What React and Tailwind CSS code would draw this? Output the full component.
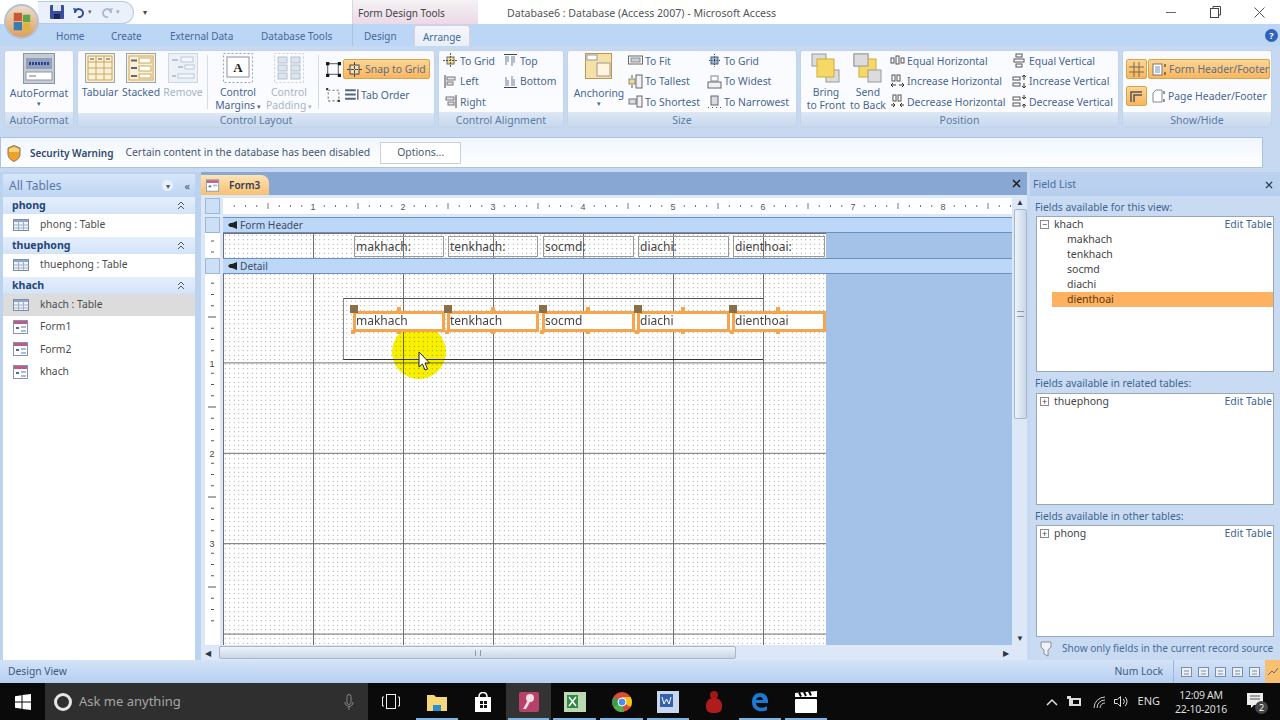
import { Fragment } from "react";

const blue = "text-[#46668f]";

function Mini({ children, w = 15, h = 15, className = "" }) {
  return (
    <svg width={w} height={h} viewBox="0 0 15 15" fill="none" className={"shrink-0 " + className}>
      {children}
    </svg>
  );
}

// small ribbon glyphs
const ic = {
  grid: (
    <Mini>
      <rect x="4" y="4" width="7" height="7" fill="#f2d98c" stroke="#6a6a6a" />
      <path d="M7.5 0v15M0 7.5h15" stroke="#555" strokeDasharray="2 1" />
    </Mini>
  ),
  top: (
    <Mini>
      <path d="M1 1.5h13" stroke="#444" />
      <path d="M3 3v9M5 3v6M9 3v10M11 3v7" stroke="#6d7f96" />
    </Mini>
  ),
  left: (
    <Mini>
      <path d="M2 1v13" stroke="#444" />
      <rect x="4" y="3" width="8" height="3" fill="#e5e9ef" stroke="#777" />
      <rect x="4" y="8" width="6" height="3" fill="#e5e9ef" stroke="#777" />
    </Mini>
  ),
  bottom: (
    <Mini>
      <path d="M1 13.5h13" stroke="#444" />
      <path d="M3 3v9M5 6v6M9 2v10M11 5v7" stroke="#6d7f96" />
    </Mini>
  ),
  right: (
    <Mini>
      <path d="M13 1v13" stroke="#444" />
      <rect x="3" y="3" width="8" height="3" fill="#e5e9ef" stroke="#777" />
      <rect x="5" y="8" width="6" height="3" fill="#e5e9ef" stroke="#777" />
    </Mini>
  ),
  fit: (
    <Mini>
      <rect x=".5" y="3" width="14" height="8" fill="#fff" stroke="#666" />
      <rect x="3" y="5" width="9" height="4" fill="#c8d2de" stroke="#888" />
    </Mini>
  ),
  tallest: (
    <Mini>
      <rect x="8" y="1" width="6" height="13" fill="#eef2f7" stroke="#666" />
      <rect x="1" y="5" width="6" height="5" fill="#f0d98a" stroke="#888" />
      <path d="M4 1v3M4 11v3" stroke="#555" />
    </Mini>
  ),
  shortest: (
    <Mini>
      <rect x="9" y="2" width="5" height="11" fill="#eef2f7" stroke="#666" />
      <rect x="1" y="5" width="7" height="5" fill="#d7dee8" stroke="#777" />
    </Mini>
  ),
  gridSize: (
    <Mini>
      <rect x="4" y="4" width="7" height="7" fill="#9db8dc" stroke="#4a5c75" />
      <path d="M2 7.5h11M7.5 1v13" stroke="#333" strokeDasharray="1 1.5" />
    </Mini>
  ),
  widest: (
    <Mini>
      <rect x="1" y="8" width="13" height="6" fill="#eef2f7" stroke="#666" />
      <rect x="4" y="2" width="7" height="5" fill="#f6fafd" stroke="#888" />
    </Mini>
  ),
  narrowest: (
    <Mini>
      <rect x="4" y="2" width="7" height="9" fill="#d5dde8" stroke="#666" />
      <path d="M1 13.5h13" stroke="#555" strokeDasharray="1 3" />
    </Mini>
  ),
  eqH: (
    <Mini>
      <rect x="1" y="5" width="3" height="5" fill="#fff" stroke="#555" />
      <rect x="6" y="3" width="3" height="8" fill="#fff" stroke="#555" />
      <rect x="11" y="5" width="3" height="5" fill="#fff" stroke="#555" />
    </Mini>
  ),
  incH: (
    <Mini>
      <rect x="2" y="1" width="3" height="6" fill="#fff" stroke="#555" />
      <rect x="7" y="1" width="3" height="6" fill="#fff" stroke="#555" />
      <path d="M1 11h5M9 11h5M1 11l2-2M1 11l2 2M14 11l-2-2M14 11l-2 2" stroke="#333" />
    </Mini>
  ),
  decH: (
    <Mini>
      <rect x="3" y="1" width="3" height="6" fill="#fff" stroke="#555" />
      <rect x="8" y="1" width="3" height="6" fill="#fff" stroke="#555" />
      <path d="M1 11h4M10 11h4M5 11l-2-2M5 11l-2 2M10 11l2-2M10 11l2 2" stroke="#333" />
    </Mini>
  ),
  eqV: (
    <Mini>
      <rect x="4" y="1" width="6" height="3" fill="#fff" stroke="#555" />
      <rect x="2" y="6" width="10" height="3" fill="#fff" stroke="#555" />
      <rect x="4" y="11" width="6" height="3" fill="#fff" stroke="#555" />
    </Mini>
  ),
  incV: (
    <Mini>
      <rect x="1" y="3" width="7" height="3" fill="#fff" stroke="#555" />
      <rect x="1" y="9" width="7" height="3" fill="#fff" stroke="#555" />
      <path d="M12 1v5M12 9v5M12 1l-2 2M12 1l2 2M12 14l-2-2M12 14l2-2" stroke="#333" />
    </Mini>
  ),
  decV: (
    <Mini>
      <rect x="1" y="3" width="7" height="3" fill="#fff" stroke="#555" />
      <rect x="1" y="9" width="7" height="3" fill="#fff" stroke="#555" />
      <path d="M12 1v4M12 10v4M12 5l-2-2M12 5l2-2M12 10l-2 2M12 10l2 2" stroke="#333" />
    </Mini>
  ),
};

function Small({ icon, label }) {
  return (
    <div className="flex h-[20.5px] items-center gap-[2px] whitespace-nowrap">
      {icon}
      <span>{label}</span>
    </div>
  );
}

function Large({ width, icon, lines, caret, disabled }) {
  return (
    <div
      className={"flex flex-col items-center leading-[12px] " + (disabled ? "text-[#a6b4c6]" : "")}
      style={{ width }}
    >
      <div className="flex h-[34px] shrink-0 items-start justify-center pt-[2px]">{icon}</div>
      {lines.map((l, i) => (
        <span key={i} className="mt-[1px] whitespace-nowrap">
          {l}
          {caret && i === lines.length - 1 ? <span className="text-[7px]"> ▾</span> : null}
        </span>
      ))}
    </div>
  );
}

function Group({ label, width, className = "", children }) {
  return (
    <div
      className="flex h-[78px] flex-col rounded-[3px] border border-[#c4d4e8] bg-gradient-to-b from-[#f8fafe] to-[#fdfdff]"
      style={{ width }}
    >
      <div className={"flex h-[62px] " + className}>{children}</div>
      <div className="flex h-[15px] items-center justify-center bg-gradient-to-b from-[#dde7f5] to-[#c7d8ee] pt-[1px] text-[10.5px] leading-none text-[#5a7aa2]">
        {label}
      </div>
    </div>
  );
}

function TableTile({ cols = 3 }) {
  const border = "#d2a650";
  return (
    <svg width="30" height="30" viewBox="0 0 30 30">
      <rect x=".5" y=".5" width="29" height="29" fill="#f7f0da" stroke="#9aa5b3" />
      <rect x="3" y="3" width="24" height="24" fill="none" stroke={border} />
      {cols === 3 ? (
        <>
          <path d="M3 9h24M3 15h24M3 21h24M11 3v24M19 3v24" stroke={border} />
          <path d="M5 6h4M13 6h4M21 6h4" stroke="#555" />
        </>
      ) : (
        <>
          <rect x="13" y="5" width="12" height="5" fill="#fff" stroke={border} />
          <rect x="13" y="13" width="12" height="5" fill="#fff" stroke={border} />
          <rect x="13" y="21" width="12" height="4" fill="#fff" stroke={border} />
          <path d="M5 7.5h6M5 15h6M5 23h6" stroke="#666" strokeWidth="2" />
        </>
      )}
    </svg>
  );
}

function RemoveIcon() {
  return (
    <svg width="30" height="30" viewBox="0 0 30 30">
      <rect x=".5" y=".5" width="29" height="29" fill="#ecf1f8" stroke="#cdd7e5" />
      <g stroke="#bcc8d8" fill="#f4f7fb">
        <rect x="13" y="4" width="12" height="5" />
        <rect x="17" y="12" width="9" height="4" />
        <rect x="10" y="21" width="16" height="4" />
      </g>
      <path d="M4 7h6M10 14h5M4 23h4" stroke="#b8c4d4" strokeWidth="2" />
    </svg>
  );
}

function BringIcon({ back }) {
  return (
    <svg width="30" height="30" viewBox="0 0 30 30">
      <rect x="1" y="1" width="14" height="12" fill="#dcdcdc" stroke="#9a9a9a" />
      {!back && <rect x="15" y="17" width="13" height="12" fill="#dcdcdc" stroke="#9a9a9a" />}
      <rect x="6" y="6" width="17" height="18" fill="#f6d867" stroke="#d3a93a" />
      {back && <rect x="15" y="17" width="13" height="12" fill="#dcdcdc" stroke="#9a9a9a" />}
      {back && <rect x="1" y="1" width="14" height="12" fill="#dcdcdc" stroke="#9a9a9a" />}
    </svg>
  );
}

const hot = "rounded-[2px] border border-[#d9a54b] bg-gradient-to-b from-[#fcd592] to-[#f9b660]";

function Ribbon() {
  return (
    <div className={"flex h-[84px] gap-[3px] bg-[#c6d9f1] pl-[4px] pt-[4px] text-[10.4px] leading-none " + blue}>
      <Group label="AutoFormat" width={70}>
        <div className="flex w-full flex-col items-center">
          <svg width="32" height="31" viewBox="0 0 32 31" className="mt-[2px]">
            <rect x=".5" y=".5" width="31" height="30" fill="#c5ccd6" stroke="#8c96a3" />
            <rect x="3" y="5" width="26" height="11" fill="#8fa0b8" />
            <path d="M6 10.5h20" stroke="#2b3f9b" strokeWidth="3" strokeDasharray="2 1" />
            <rect x="3" y="19" width="26" height="8" fill="#fff" stroke="#8c96a3" />
            <path d="M6 23h7" stroke="#777" />
          </svg>
          <span className="mt-[4px]">AutoFormat</span>
          <span className="mt-[2px] text-[7px]">▾</span>
        </div>
      </Group>

      <Group label="Control Layout" width={358} className="pl-[3px]">
        <Large width={38} icon={<TableTile cols={3} />} lines={["Tabular"]} />
        <div className="w-[3px]" />
        <Large width={38} icon={<TableTile cols={2} />} lines={["Stacked"]} />
        <div className="w-[3px]" />
        <Large width={40} icon={<RemoveIcon />} lines={["Remove"]} disabled />
        <div className="mx-[4px] my-[4px] w-px bg-[#d4dce8]" />
        <Large
          width={52}
          icon={
            <svg width="30" height="30" viewBox="0 0 30 30">
              <rect x=".5" y=".5" width="29" height="29" fill="none" stroke="#9aa5b3" strokeDasharray="2 2" />
              <rect x="4" y="4" width="22" height="20" fill="#fff" stroke="#8a94a2" />
              <text x="15" y="19" textAnchor="middle" fontSize="13" fontWeight="700" fontFamily="Liberation Serif" fill="#222">
                A
              </text>
            </svg>
          }
          lines={["Control", "Margins"]}
          caret
        />
        <Large
          width={50}
          disabled
          icon={
            <svg width="30" height="30" viewBox="0 0 30 30">
              <rect x=".5" y=".5" width="29" height="29" fill="none" stroke="#c5cfdc" strokeDasharray="2 2" />
              <g fill="#dce4ee" stroke="#b5c1d1">
                <rect x="4" y="4" width="9" height="6" />
                <rect x="17" y="4" width="9" height="6" />
                <rect x="4" y="12" width="9" height="6" />
                <rect x="17" y="12" width="9" height="6" />
                <rect x="4" y="20" width="9" height="6" />
                <rect x="17" y="20" width="9" height="6" />
              </g>
            </svg>
          }
          lines={["Control", "Padding"]}
          caret
        />
        <div className="mx-[4px] my-[4px] w-px bg-[#d4dce8]" />
        <div className="flex flex-col pl-[2px]">
          <div className="mt-[8px] flex h-[20px] items-center">
            <Mini w={16} h={16}>
              <rect x="2.5" y="2.5" width="10" height="10" stroke="#666" />
              <rect x="1" y="1" width="3" height="3" fill="#111" />
              <rect x="12" y="1" width="3" height="3" fill="#111" />
              <rect x="1" y="12" width="3" height="3" fill="#111" />
              <rect x="12" y="12" width="3" height="3" fill="#111" />
            </Mini>
            <div className={"ml-[2px] flex h-[20px] w-[87px] items-center gap-[3px] whitespace-nowrap pl-[3px] text-[#5b6e86] " + hot}>
              <Mini>
                <rect x="3" y="3" width="9" height="9" fill="#f8dfa8" stroke="#445" />
                <path d="M0 7.5h15M7.5 0v15" stroke="#445" strokeDasharray="3 1" />
              </Mini>
              Snap to Grid
            </div>
          </div>
          <div className="mt-[8px] flex h-[16px] items-center">
            <Mini w={16} h={16}>
              <rect x="3" y="3" width="10" height="10" stroke="#777" strokeDasharray="2 2" />
              <rect x="1" y="1" width="2" height="2" fill="#333" />
              <rect x="12" y="12" width="2" height="2" fill="#333" />
            </Mini>
            <Mini w={16} h={16} className="ml-[3px]">
              <path d="M1 3h10M1 7h10M1 11h10" stroke="#567" strokeWidth="2" />
              <path d="M13 2v10" stroke="#333" />
            </Mini>
            <span className="ml-[1px] whitespace-nowrap">Tab Order</span>
          </div>
        </div>
      </Group>

      <Group label="Control Alignment" width={126} className="pl-[4px]">
        <div className="-mt-[0.5px] flex w-[60px] flex-col">
          <Small icon={ic.grid} label="To Grid" />
          <Small icon={ic.left} label="Left" />
          <Small icon={ic.right} label="Right" />
        </div>
        <div className="-mt-[0.5px] flex flex-col">
          <Small icon={ic.top} label="Top" />
          <Small icon={ic.bottom} label="Bottom" />
        </div>
      </Group>

      <Group label="Size" width={230} className="pl-[4px]">
        <div className="flex w-[54px] flex-col items-center">
          <svg width="28" height="26" viewBox="0 0 28 26" className="mt-[2px] shrink-0">
            <rect x=".5" y=".5" width="26" height="25" fill="#f7e0a8" stroke="#b89a55" />
            <rect x="2" y="2" width="10" height="5" fill="#fff" stroke="#999" />
            <rect x="12" y="10" width="13" height="13" fill="#fff5dc" stroke="#999" />
          </svg>
          <span className="mt-[9px]">Anchoring</span>
          <span className="mt-[2px] text-[7px]">▾</span>
        </div>
        <div className="-mt-[0.5px] ml-[2px] flex w-[79px] flex-col">
          <Small icon={ic.fit} label="To Fit" />
          <Small icon={ic.tallest} label="To Tallest" />
          <Small icon={ic.shortest} label="To Shortest" />
        </div>
        <div className="-mt-[0.5px] flex flex-col">
          <Small icon={ic.gridSize} label="To Grid" />
          <Small icon={ic.widest} label="To Widest" />
          <Small icon={ic.narrowest} label="To Narrowest" />
        </div>
      </Group>

      <Group label="Position" width={319} className="pl-[4px]">
        <Large width={42} icon={<BringIcon />} lines={["Bring", "to Front"]} />
        <Large width={42} icon={<BringIcon back />} lines={["Send", "to Back"]} />
        <div className="-mt-[0.5px] ml-[1px] flex w-[122px] flex-col">
          <Small icon={ic.eqH} label="Equal Horizontal" />
          <Small icon={ic.incH} label="Increase Horizontal" />
          <Small icon={ic.decH} label="Decrease Horizontal" />
        </div>
        <div className="-mt-[0.5px] flex flex-col">
          <Small icon={ic.eqV} label="Equal Vertical" />
          <Small icon={ic.incV} label="Increase Vertical" />
          <Small icon={ic.decV} label="Decrease Vertical" />
        </div>
      </Group>

      <Group label="Show/Hide" width={150} className="flex-col pl-[3px]">
        <div className="mt-[8px] flex h-[20px] items-center">
          <div className={"flex h-[20px] w-[21px] items-center justify-center " + hot}>
            <Mini>
              <path d="M0 5h15M0 10h15M5 0v15M10 0v15" stroke="#7a6a4a" />
            </Mini>
          </div>
          <div className={"ml-px flex h-[20px] w-[122px] items-center gap-[2px] whitespace-nowrap pl-[3px] text-[#5b6e86] " + hot}>
            <Mini>
              <rect x="1" y="2" width="9" height="11" fill="#fff" stroke="#777" />
              <rect x="3" y="4" width="5" height="7" fill="#b8c8dc" />
              <path d="M13 2v3M13 10v3" stroke="#222" />
            </Mini>
            Form Header/Footer
          </div>
        </div>
        <div className="mt-[7px] flex h-[20px] items-center">
          <div className={"flex h-[20px] w-[21px] items-center justify-center " + hot}>
            <Mini>
              <path d="M2 13V3h11M5 13V6h8" stroke="#555" strokeWidth="1.5" />
            </Mini>
          </div>
          <Mini className="ml-[4px]">
            <path d="M2 4l3-3h6v12H2z" fill="#fff" stroke="#888" />
            <path d="M13 2v3M13 10v3" stroke="#333" />
          </Mini>
          <span className="ml-[2px] whitespace-nowrap">Page Header/Footer</span>
        </div>
      </Group>
    </div>
  );
}

function TitleBar() {
  return (
    <div className="relative flex h-[24px] items-center bg-white text-[10.6px] text-[#444]">
      <div className="ml-[38px] flex h-[23px] w-[96px] shrink-0 items-center gap-[9px] rounded-r-[12px] border border-l-0 border-[#b6cbe6] bg-[#eaf1fb] pl-[12px]">
        <svg width="14" height="14" viewBox="0 0 14 14">
          <rect width="14" height="14" rx="1" fill="#3c4c9c" />
          <rect x="3" y="0" width="8" height="6" fill="#dfe6f4" />
          <rect x="4" y="9" width="6" height="5" fill="#1c2558" />
        </svg>
        <svg width="12" height="12" viewBox="0 0 12 12" fill="none">
          <path d="M2 7a4 4 0 1 1 3 4" stroke="#2f4f9a" strokeWidth="2" />
          <path d="M0 2l5 1-3 4z" fill="#2f4f9a" />
        </svg>
        <span className="-ml-[6px] text-[7px] text-[#667]">▾</span>
        <svg width="12" height="12" viewBox="0 0 12 12" fill="none">
          <path d="M10 7a4 4 0 1 0-3 4" stroke="#a9bbd4" strokeWidth="2" />
          <path d="M12 2l-5 1 3 4z" fill="#a9bbd4" />
        </svg>
        <span className="-ml-[6px] text-[7px] text-[#a0aab8]">▾</span>
      </div>
      <span className="ml-[9px] w-[209px] text-[8px] leading-none text-[#444]">▾</span>
      <div className="flex h-[24px] w-[126px] shrink-0 items-center border-l border-[#d6d6dc] bg-gradient-to-b from-[#f4f2f4] to-[#ecd9e6] pl-[5px] pt-[2px] text-[10px] text-[#444]">
        Form Design Tools
      </div>
      <span className="ml-[29px] whitespace-nowrap pt-[3px] text-[#555]">Database6 : Database (Access 2007) - Microsoft Access</span>
      <div className="ml-auto flex items-center gap-[33px] pr-[15px]">
        <svg width="12" height="12" viewBox="0 0 12 12">
          <path d="M1 6.5h10" stroke="#666" />
        </svg>
        <svg width="11" height="12" viewBox="0 0 11 12" fill="none">
          <rect x=".5" y="2.5" width="8" height="9" stroke="#444" />
          <path d="M3 2V.5h7.500V9H9" stroke="#444" />
        </svg>
        <svg width="11" height="11" viewBox="0 0 11 11">
          <path d="M.5 .5l10 10M10.500 .5l-10 10" stroke="#555" />
        </svg>
      </div>
    </div>
  );
}

function TabRow() {
  return (
    <div className="relative flex h-[22px] items-end bg-[#bcd6f5] text-[10px] leading-none text-[#47689a]">
      <div className="flex h-full items-center whitespace-nowrap pl-[56px] pt-[2px]">
        <span className="w-[55px]">Home</span>
        <span className="w-[59px]">Create</span>
        <span className="w-[91px]">External Data</span>
        <span className="w-[91px]">Database Tools</span>
      </div>
      <div className="flex h-full w-[62px] items-center border-l border-[#a9c2e0] pl-[11px] pt-[2px]">Design</div>
      <div className="flex h-[21px] w-[56px] items-center justify-center rounded-t-[3px] border border-b-0 border-[#e6c9d4] bg-gradient-to-b from-[#f4f7fc] to-[#e8eff9] pt-[1px]">
        Arrange
      </div>
      <div className="ml-auto mr-[2px] flex h-full items-center">
        <span className="flex h-[13px] w-[13px] items-center justify-center rounded-full bg-[#2f63b8] text-[9px] font-bold text-white">?</span>
      </div>
    </div>
  );
}

function OfficeButton() {
  return (
    <div className="absolute left-[4px] top-[4px] flex h-[35px] w-[35px] items-center justify-center rounded-full border-2 border-[#b4c2d4] bg-gradient-to-b from-[#ecdcc8] to-[#dc9f60]">
      <svg width="22" height="22" viewBox="0 0 24 24">
        <rect x="3" y="2" width="9" height="9" fill="#c9583a" />
        <rect x="13" y="4" width="8" height="8" fill="#5fa548" />
        <rect x="3" y="12" width="9" height="9" fill="#3a7cae" />
        <rect x="13" y="13" width="8" height="8" fill="#e0b43c" />
      </svg>
    </div>
  );
}

function SecurityBar() {
  return (
    <div className="h-[42px] bg-[#c6d9f1] pt-[7px]">
      <div className="flex h-[31px] w-[1263px] items-center border border-[#a8c3e4] bg-gradient-to-b from-[#f0f6fe] to-white pl-[6px] pt-[1px] text-[10.4px] text-[#45566f]">
        <svg width="14" height="17" viewBox="0 0 14 17">
          <path d="M7 .5l6 2.500v6c0 4-3 6-6 7.500C4 15 1 13 1 9V3z" fill="#f1a02c" stroke="#8a7a5a" />
          <path d="M7 2l5 2v3H2V4z" fill="#f8d47a" />
        </svg>
        <span className="ml-[9px] whitespace-nowrap text-[10px] font-semibold text-[#2f4a70]">Security Warning</span>
        <span className="ml-[12px] whitespace-nowrap">Certain content in the database has been disabled</span>
        <span className="ml-[10px] flex h-[22px] w-[81px] items-center justify-center border border-[#c7d1de] bg-white text-[#4a5a70]">
          Options...
        </span>
      </div>
    </div>
  );
}

function NavGroup({ name, children }) {
  return (
    <div className="mb-[2px]">
      <div className="flex h-[17px] items-center justify-between bg-gradient-to-b from-[#e4effc] to-[#d3e3f7] pl-[9px] pr-[10px] text-[10.6px] font-bold text-[#24457a]">
        {name}
        <svg width="8" height="9" viewBox="0 0 8 9" fill="none">
          <path d="M1 4l3-3 3 3M1 8l3-3 3 3" stroke="#556" />
        </svg>
      </div>
      {children}
    </div>
  );
}

function NavItem({ label, form, active }) {
  const height = form ? "h-[22.3px] " : active ? "h-[22px] " : "h-[21px] ";
  return (
    <div className={"flex items-center pl-[10px] text-[10.3px] text-[#4c4c4c] " + height + (active ? "bg-[#dcdcdc]" : "bg-white")}>
      {form ? (
        <svg width="16" height="14" viewBox="0 0 16 14">
          <rect x=".5" y=".5" width="14" height="13" fill="#fff" stroke="#8494ac" />
          <rect x="1" y="1" width="13" height="3" fill="#c0598a" />
          <path d="M3 8h3" stroke="#4a6aa0" strokeWidth="2" />
          <rect x="8" y="6" width="5" height="2" fill="#a9bdd8" />
          <rect x="8" y="10" width="5" height="2" fill="#a9bdd8" />
        </svg>
      ) : (
        <svg width="16" height="12" viewBox="0 0 16 12">
          <rect x=".5" y=".5" width="15" height="11" fill="#eef3fa" stroke="#7f8da3" />
          <rect x="1" y="1" width="14" height="2" fill="#8ea6c8" />
          <path d="M1 6h14M1 9h14M5.500 3v8M10.500 3v8" stroke="#9fb0c8" />
        </svg>
      )}
      <span className="ml-[11px] whitespace-nowrap">{label}</span>
    </div>
  );
}

function NavPane() {
  return (
    <div className="flex h-full w-[198px] flex-col bg-[#bcd3f0] pl-[3px] pr-[3px] pt-[2px]">
      <div className="flex h-[23px] shrink-0 items-center justify-between bg-gradient-to-b from-[#d7e6f9] to-[#bdd5f3] pl-[6px] pr-[5px] text-[12px] text-[#5a7aa5]">
        All Tables
        <div className="flex items-center gap-[11px]">
          <span className="flex h-[11px] w-[11px] items-center justify-center rounded-full bg-[#e8f0fa] text-[8px] leading-none text-[#556]">▾</span>
          <span className="text-[11px] leading-none text-[#556]">«</span>
        </div>
      </div>
      <div className="flex-1 bg-white">
        <NavGroup name="phong">
          <NavItem label="phong : Table" />
        </NavGroup>
        <NavGroup name="thuephong">
          <NavItem label="thuephong : Table" />
        </NavGroup>
        <NavGroup name="khach">
          <NavItem label="khach : Table" active />
          <NavItem label="Form1" form />
          <NavItem label="Form2" form />
          <NavItem label="khach" form />
        </NavGroup>
      </div>
    </div>
  );
}

function HRuler() {
  const ticks = Array.from({ length: 71 }, (_, i) => i);
  return (
    <svg width="789" height="16" className="block bg-white">
      {ticks.map((i) => {
        const x = i * 11.25;
        if (i % 8 === 0) {
          return i === 0 ? null : (
            <text key={i} x={x} y="12" textAnchor="middle" fontSize="9" fontFamily="Liberation Sans" fill="#555">
              {i / 8}
            </text>
          );
        }
        return <path key={i} d={i % 4 === 0 ? `M${x} 5v6` : `M${x} 7v2`} stroke="#777" />;
      })}
    </svg>
  );
}

function VRuler() {
  const ticks = Array.from({ length: 32 }, (_, i) => i);
  return (
    <svg width="15" height="371" className="block bg-white">
      {ticks.map((i) => {
        const y = i * 11.25 - 2;
        if (i % 8 === 0) {
          return i === 0 ? null : (
            <text key={i} x="7" y={y + 5} textAnchor="middle" fontSize="9" fontFamily="Liberation Sans" fill="#444">
              {i / 8}
            </text>
          );
        }
        return <path key={i} d={i % 4 === 0 ? `M3 ${y}h8` : `M6 ${y}h3`} stroke="#555" />;
      })}
    </svg>
  );
}

function SectionBar({ label }) {
  return (
    <div className="flex h-[16px] border-y border-[#6f8fbd] bg-[#bdd7f9] pl-[5px] text-[10.2px] leading-none text-[#3d4d62]">
      <span className="flex items-center gap-[3px]">
        <svg width="9" height="8" viewBox="0 0 9 8">
          <path d="M9 0v8L4 6H2L0 4l2-2h2z" fill="#222" />
        </svg>
        {label}
      </span>
    </div>
  );
}

const gridBg =
  "bg-[linear-gradient(to_right,#6f6f6f_1px,transparent_1px),linear-gradient(to_bottom,#6f6f6f_1px,transparent_1px),radial-gradient(circle,#8a8a8a_0.7px,transparent_0.9px)] bg-[length:90px_90.4px,90px_90.4px,4.5px_4.5px]";

const fields = ["makhach", "tenkhach", "socmd", "diachi", "dienthoai"];
const fieldX = [131, 225, 320, 415, 510];
const fieldW = [90, 90, 91, 91, 92];

function HeaderCanvas() {
  return (
    <div className={"relative h-[25px] w-[603px] bg-white " + gridBg}>
      {fields.map((f, i) => (
        <div
          key={f}
          className="absolute top-[3px] h-[21px] border border-[#9a9a9a] pl-[1px] text-[12px] leading-[19px] text-[#444]"
          style={{ left: fieldX[i], width: fieldW[i] }}
        >
          {f}:
        </div>
      ))}
    </div>
  );
}

function DetailCanvas() {
  return (
    <div className={"relative isolate h-[371px] w-[603px] bg-white bg-[position:0_-2px] " + gridBg}>
      {/* highlight ring of the screen recorder, sits under the selected fields */}
      <div className="absolute left-[169px] top-[51px] h-[54px] w-[54px] rounded-full bg-[#f7f000] mix-blend-multiply" />
      <div className="absolute left-[120px] top-[24px] h-[62px] w-[420px] border-y border-l border-b-[#333] border-l-[#8a8a8a] border-t-[#555]" />
      {fields.map((f, i) => (
        <Fragment key={f}>
          <div
            className="absolute top-[37px] h-[21px] border-[3px] border-[#f6a54c] bg-white text-[12px] leading-[13px] text-[#444]"
            style={{ left: fieldX[i] - 1, width: fieldW[i] + 2 }}
          >
            {f}
          </div>
          <div className="absolute top-[31px] h-[8px] w-[8px] bg-[#8b6f47]" style={{ left: fieldX[i] - 4 }} />
          <div className="absolute top-[33px] h-[4px] w-[4px] bg-[#f6a54c]" style={{ left: fieldX[i] + 43 }} />
          <div className="absolute top-[56px] h-[4px] w-[4px] bg-[#f6a54c]" style={{ left: fieldX[i] + 43 }} />
          <div className="absolute top-[56px] h-[4px] w-[4px] bg-[#f6a54c]" style={{ left: fieldX[i] - 3 }} />
        </Fragment>
      ))}
      <svg width="13" height="20" viewBox="0 0 13 20" className="absolute left-[195px] top-[77px]">
        <path d="M1 1v15l3.500-3 2.500 6 2.500-1-2.500-6h4.500z" fill="#fff" stroke="#222" />
      </svg>
    </div>
  );
}

function DesignArea() {
  return (
    <div className="flex h-full w-[829px] flex-col bg-[#bcd3f0] pl-[3px]">
      <div className="flex h-[23px] shrink-0 items-end justify-between bg-[#88a7d3] pt-[3px]">
        <div className="flex h-[20px] w-[68px] items-center gap-[9px] rounded-tr-[8px] bg-gradient-to-b from-[#fde3b4] to-[#f7c071] pl-[5px] text-[10px] font-semibold text-[#2f3c4f]">
          <svg width="14" height="13" viewBox="0 0 16 14">
            <rect x=".5" y=".5" width="14" height="13" fill="#fff" stroke="#8494ac" />
            <rect x="1" y="1" width="13" height="3" fill="#c0598a" />
            <path d="M3 8h3" stroke="#4a6aa0" strokeWidth="2" />
            <rect x="8" y="6" width="5" height="2" fill="#a9bdd8" />
          </svg>
          Form3
        </div>
        <svg width="9" height="9" viewBox="0 0 9 9" className="mb-[7px] mr-[6px]">
          <path d="M1 1l7 7M8 1L1 8" stroke="#1a1a1a" strokeWidth="1.5" />
        </svg>
      </div>
      <div className="flex min-h-0 flex-1 bg-[#dce8f7]">
        <div className="flex min-w-0 flex-1 flex-col">
          <div className="flex h-[22px] shrink-0 items-end pb-[3px] pl-[4px]">
            <div className="h-[16px] w-[15px] border border-[#9db7d8] bg-[#cbdff7]" />
            <div className="ml-[3px] w-[789px]">
              <HRuler />
            </div>
          </div>
          <div className="flex min-h-0 flex-1">
            <div className="ml-[4px] flex w-[15px] flex-col bg-white">
              <div className="h-[16px] shrink-0 border border-[#9db7d8] bg-[#cbdff7]" />
              <div className="h-[25px] shrink-0">
                <svg width="15" height="25">
                  <path d="M6 8h3M6 19h3" stroke="#555" />
                </svg>
              </div>
              <div className="h-[16px] shrink-0 border border-[#9db7d8] bg-[#cbdff7]" />
              <VRuler />
            </div>
            <div className="ml-[3px] flex w-[789px] flex-col overflow-hidden bg-[#a4c2e8]">
              <SectionBar label="Form Header" />
              <HeaderCanvas />
              <SectionBar label="Detail" />
              <DetailCanvas />
            </div>
          </div>
          <div className="flex h-[15px] shrink-0 items-center bg-[#dce8f7]">
            <span className="ml-[4px] w-[10px] text-[8px] leading-none text-[#334]">◀</span>
            <div className="relative ml-[4px] flex h-[13px] w-[517px] items-center justify-center rounded-[2px] border border-[#a5b7cd] bg-gradient-to-b from-[#eef3f9] to-[#c9d6e6]">
              <span className="h-[6px] w-[6px] border-x border-[#8a9ab0]" />
            </div>
            <span className="ml-[267px] text-[8px] leading-none text-[#334]">▶</span>
          </div>
        </div>
        <div className="flex w-[14px] shrink-0 flex-col items-center bg-[#dce8f7]">
          <span className="mt-[3px] text-[8px] leading-none text-[#334]">▲</span>
          <div className="mt-[3px] flex h-[210px] w-[13px] items-center justify-center rounded-[2px] border border-[#a5b7cd] bg-gradient-to-r from-[#eef3f9] to-[#c9d6e6]">
            <span className="h-[6px] w-[7px] border-y border-[#8a9ab0]" />
          </div>
          <span className="mb-[18px] mt-auto text-[8px] leading-none text-[#334]">▼</span>
        </div>
      </div>
    </div>
  );
}

function FieldSection({ title, labelH, height, name, open, children }) {
  return (
    <div className="shrink-0">
      <div className="flex items-center whitespace-nowrap pl-[5px] pt-[3px] text-[10.3px] text-[#41648f]" style={{ height: labelH }}>
        {title}
      </div>
      <div className="relative ml-[6px] w-[238px] border border-[#9aa7b8] bg-white text-[10.5px] text-[#444]" style={{ height }}>
        <div className="flex h-[15px] items-center pl-[3px]">
          <span className="flex h-[9px] w-[9px] items-center justify-center border border-[#8b8b8b] text-[9px] leading-none">
            {open ? "−" : "+"}
          </span>
          <span className="ml-[5px]">{name}</span>
          <span className="ml-auto pr-[1px] text-[#41648f]">Edit Table</span>
        </div>
        {children}
      </div>
    </div>
  );
}

function FieldList() {
  return (
    <div className="flex h-full w-[250px] flex-col bg-[#c9dbf3]">
      <div className="flex h-[24px] shrink-0 items-center justify-between bg-gradient-to-b from-[#bcd2ef] to-[#b7cfee] pl-[3px] pr-[7px] pt-[2px] text-[10.5px] text-[#4a6c98]">
        Field List
        <svg width="8" height="8" viewBox="0 0 9 9">
          <path d="M1 1l7 7M8 1L1 8" stroke="#2a3a50" strokeWidth="1.5" />
        </svg>
      </div>
      <FieldSection title="Fields available for this view:" labelH={20} height={156} name="khach" open>
        <div className="flex flex-col pl-[15px]">
          {fields.map((f) => (
            <div key={f} className={"flex h-[15px] items-center pl-[15px] " + (f === "dienthoai" ? "bg-[#ffb162] text-[#5a3a10]" : "")}>
              {f}
            </div>
          ))}
        </div>
      </FieldSection>
      <FieldSection title="Fields available in related tables:" labelH={21} height={112} name="thuephong" />
      <FieldSection title="Fields available in other tables:" labelH={20} height={112} name="phong" />
      <div className="flex flex-1 items-center whitespace-nowrap pl-[8px] text-[10.1px] text-[#4a6c98]">
        <svg width="16" height="16" viewBox="0 0 16 16">
          <path d="M3 1h10v5l-3 3v6l-4-2V9L3 6z" fill="#eef1f5" stroke="#8a8f98" />
        </svg>
        <span className="ml-[8px]">Show only fields in the current record source</span>
      </div>
    </div>
  );
}

function StatusBar() {
  return (
    <div className="flex h-[23px] items-center bg-gradient-to-b from-[#d3e3f8] to-[#b6cff0] pl-[8px] text-[10.3px] text-[#3f5a80]">
      Design View
      <span className="ml-auto whitespace-nowrap">Num Lock</span>
      <div className="ml-[10px] flex h-full w-[107px] items-center gap-[3px] border-l border-[#9db7d8] pl-[6px]">
        {[0, 1, 2, 3, 4].map((i) => (
          <svg key={i} width="14" height="12" viewBox="0 0 14 12">
            <rect x="1.5" y="1.5" width="10" height="9" fill="#e9eff7" stroke="#7f8da3" />
            <path d="M4 5h5M4 8h5" stroke="#7f8da3" />
          </svg>
        ))}
        <div className="flex h-full flex-1 items-center justify-center bg-[#f7c071]">
          <svg width="12" height="12" viewBox="0 0 12 12">
            <path d="M1 9l4-4 2 2 4-5" stroke="#667" fill="none" />
          </svg>
        </div>
      </div>
    </div>
  );
}

function TaskIcon({ children, active, open, width = 46 }) {
  return (
    <div className={"relative flex h-full items-center justify-center " + (active ? "bg-[#333]" : "")} style={{ width }}>
      {children}
      {open && <div className="absolute bottom-0 left-[2px] right-[2px] h-[2px] bg-[#7fb4e0]" />}
    </div>
  );
}

function Taskbar() {
  return (
    <div className="flex h-[37px] items-center bg-[#0a0a0a] text-white">
      <div className="flex h-full w-[45px] items-center justify-center">
        <svg width="16" height="16" viewBox="0 0 16 16" fill="#fff">
          <path d="M0 2.300l6.500-1v6.200H0zM7.500 1.100L16 0v7.500H7.500zM0 8.500h6.500v6.200l-6.500-1zM7.500 8.500H16V16l-8.500-1.100z" />
        </svg>
      </div>
      <div className="flex h-full w-[323px] items-center bg-[#2f2f2f] pl-[9px] pr-[14px]">
        <span className="h-[18px] w-[18px] rounded-full border-[3px] border-[#e6e6e6]" />
        <span className="ml-[7px] text-[13px] text-[#a5a5a5]">Ask me anything</span>
        <svg width="10" height="16" viewBox="0 0 10 16" fill="none" className="ml-auto">
          <rect x="3" y=".5" width="4" height="10" rx="2" stroke="#888" />
          <path d="M1 8c0 6 8 6 8 0M5 13v3" stroke="#888" />
        </svg>
      </div>
      <div className="flex h-full w-[46px] items-center justify-center">
        <svg width="18" height="15" viewBox="0 0 18 15" fill="none">
          <rect x="4.5" y=".5" width="9" height="14" stroke="#eee" />
          <path d="M2 3H.5v9H2M16 3h1.500v9H16" stroke="#eee" />
        </svg>
      </div>
      <TaskIcon open width={46}>
        <svg width="20" height="18" viewBox="0 0 20 18">
          <path d="M0 2h7l2 2h11v14H0z" fill="#f5d777" />
          <rect x="6" y="12" width="8" height="6" fill="#2a8fd4" />
        </svg>
      </TaskIcon>
      <TaskIcon width={46}>
        <svg width="18" height="20" viewBox="0 0 18 20">
          <path d="M1 5h16v15H1z" fill="#fff" />
          <path d="M5 5c0-6 8-6 8 0" stroke="#fff" strokeWidth="1.5" fill="none" />
          <path d="M6 9h3v3H6zM10 9h3v3h-3zM6 13h3v3H6zM10 13h3v3h-3z" fill="#111" />
        </svg>
      </TaskIcon>
      <TaskIcon active open width={45}>
        <svg width="20" height="22" viewBox="0 0 20 22">
          <rect x="0" y="1" width="20" height="20" rx="2" fill="#b8416a" />
          <circle cx="11" cy="7" r="4" fill="#f3dde6" />
          <path d="M9 9l-5 9h3l4-7z" fill="#f3dde6" />
        </svg>
      </TaskIcon>
      <TaskIcon open width={47}>
        <svg width="22" height="20" viewBox="0 0 22 20">
          <rect width="22" height="20" fill="#bcd9b4" />
          <rect x="3" y="3" width="11" height="13" fill="#2e8a45" />
          <path d="M5 5l7 9M12 5l-7 9" stroke="#fff" strokeWidth="1.5" />
        </svg>
      </TaskIcon>
      <TaskIcon open width={47}>
        <svg width="20" height="20" viewBox="0 0 20 20">
          <circle cx="10" cy="10" r="10" fill="#dd4b39" />
          <path d="M10 10L1.500 15A10 10 0 0 0 12 20z" fill="#4caf50" />
          <path d="M10 10l8.500 5A10 10 0 0 0 18.500 5H10z" fill="#f5c518" />
          <path d="M10 10L1.500 15A10 10 0 0 1 1.500 5z" fill="#3a9b48" />
          <circle cx="10" cy="10" r="4" fill="#4a8ef0" stroke="#fff" />
        </svg>
      </TaskIcon>
      <TaskIcon open width={46}>
        <svg width="22" height="22" viewBox="0 0 22 22">
          <rect width="22" height="22" fill="#c9d8ee" />
          <rect x="3" y="3" width="13" height="13" fill="#3662ad" />
          <path d="M5 6l2 7 2.500-5L12 13l2-7" stroke="#fff" fill="none" />
        </svg>
      </TaskIcon>
      <TaskIcon width={46}>
        <svg width="18" height="24" viewBox="0 0 18 24">
          <circle cx="9" cy="5" r="4" fill="#a01818" />
          <path d="M1 16c0-6 4-8 8-8s8 2 8 8-3 7-8 7-8-1-8-7z" fill="#b01c1c" />
        </svg>
      </TaskIcon>
      <TaskIcon open width={46}>
        <svg width="22" height="24" viewBox="0 0 22 24" fill="none">
          <path d="M3 12c0-6 3.500-9 8-9s8 3 8 8v2H7c0 5 7 6 11 3v4c-6 3-15 1-15-8z" fill="#1a79d4" />
          <path d="M7 10h7c0-4-6-4-7 0z" fill="#0a0a0a" />
        </svg>
      </TaskIcon>
      <TaskIcon open width={46}>
        <svg width="22" height="22" viewBox="0 0 22 22">
          <rect y="8" width="22" height="14" rx="1" fill="#fff" />
          <path d="M0 2l22-2v6H0z" fill="#fff" />
          <path d="M4 1.500l2 4M9 1l2 4M14 .5l2 4" stroke="#000" strokeWidth="2" />
        </svg>
      </TaskIcon>
      <div className="ml-auto flex h-full items-center pr-[17px] text-[11px] text-[#dcdcdc]">
        <svg width="12" height="8" viewBox="0 0 12 8" fill="none">
          <path d="M1 7l5-5 5 5" stroke="#ddd" strokeWidth="1.5" />
        </svg>
        <svg width="14" height="12" viewBox="0 0 14 12" className="ml-[9px]">
          <rect x="2" y="2" width="12" height="8" fill="#ddd" />
          <rect x="0" y="0" width="4" height="3" fill="#ddd" />
          <rect x="6" y="4" width="6" height="4" fill="#0a0a0a" />
        </svg>
        <svg width="14" height="14" viewBox="0 0 14 14" fill="none" className="ml-[11px]">
          <path d="M2 13a11 11 0 0 1 11-11M5 13a8 8 0 0 1 8-8M8 13a5 5 0 0 1 5-5" stroke="#ccc" />
        </svg>
        <svg width="15" height="13" viewBox="0 0 15 13" fill="none" className="ml-[8px]">
          <path d="M.5 4.500h3l3-3v10l-3-3h-3z" stroke="#ddd" />
          <path d="M9 4a3 3 0 0 1 0 5M11 2a6 6 0 0 1 0 9" stroke="#ddd" />
        </svg>
        <span className="ml-[9px]">ENG</span>
        <div className="ml-[12px] flex w-[58px] flex-col items-center whitespace-nowrap text-[10.5px] leading-[14px] tracking-[-0.3px]">
          <span>12:09 AM</span>
          <span>22-10-2016</span>
        </div>
        <div className="relative ml-[17px] h-[18px] w-[16px]">
          <svg width="16" height="16" viewBox="0 0 16 16">
            <path d="M0 0h16v12H7l-3 3v-3H0z" fill="#eee" />
            <path d="M3 3h10M3 6h10" stroke="#555" />
          </svg>
          <span className="absolute -bottom-[3px] -right-[5px] flex h-[13px] w-[13px] items-center justify-center rounded-full bg-[#444] text-[9px] leading-none text-white">
            2
          </span>
        </div>
      </div>
    </div>
  );
}

export default function App() {
  return (
    <div className="relative flex h-[720px] w-[1280px] flex-col overflow-hidden bg-[#c6d9f1] font-['Noto_Sans','Open_Sans','Liberation_Sans',sans-serif]">
      <TitleBar />
      <TabRow />
      <Ribbon />
      <SecurityBar />
      <div className="flex h-[488px]">
        <NavPane />
        <DesignArea />
        <div className="w-[3px]" />
        <FieldList />
      </div>
      <StatusBar />
      <Taskbar />
      <OfficeButton />
    </div>
  );
}
